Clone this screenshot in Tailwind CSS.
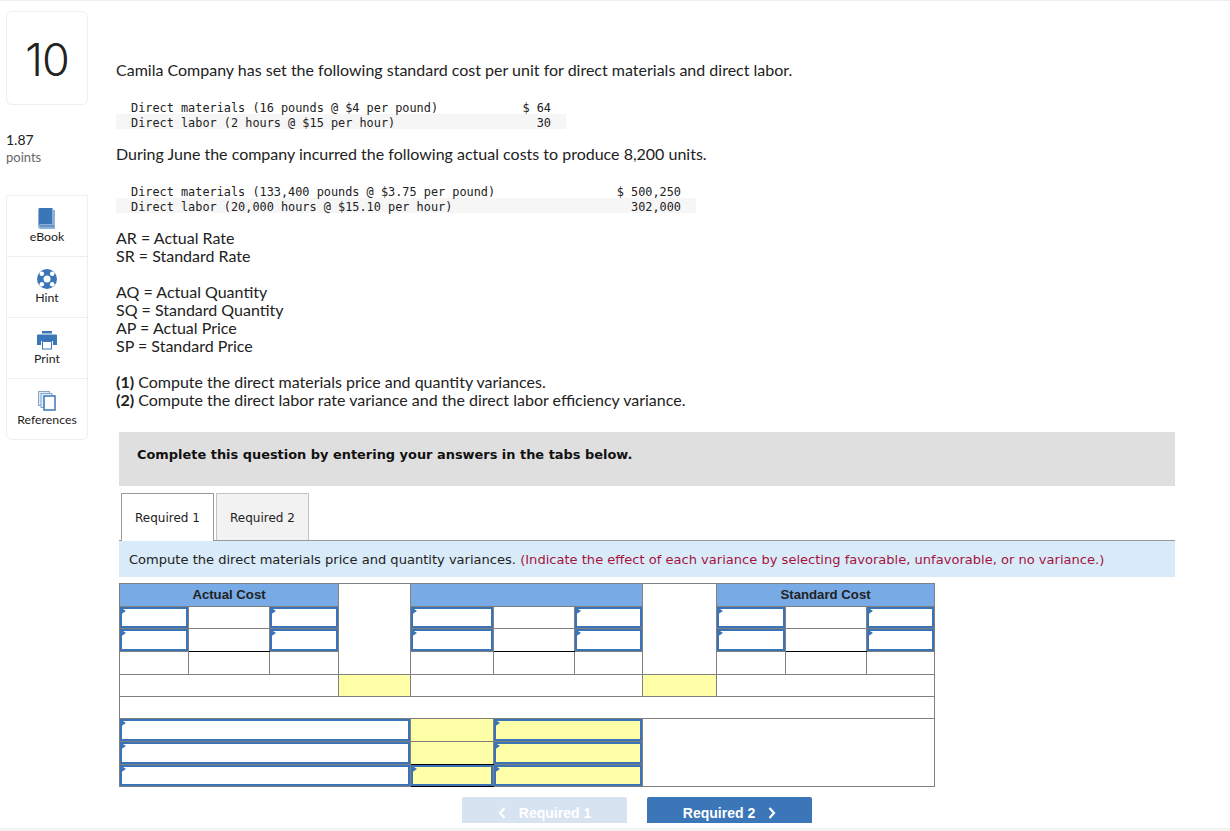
<!DOCTYPE html>
<html lang="en">
<head>
    <meta charset="UTF-8">
    <title>Question 10</title>
    <script src="https://cdn.jsdelivr.net/npm/@tailwindcss/browser@4"></script>
</head>
<body class="bg-white">
<div class="h-[831px] w-[1230px] overflow-hidden border-t border-[#eeeeee] font-['Lato',sans-serif] text-[#222222]">
  <div class="flex h-[830px] border-b-[3px] border-[#f2f2f2]">
    <!-- left rail -->
    <div class="w-[116px] shrink-0 pl-[6px] pt-[10px]">
      <div class="flex h-[94px] w-[82px] items-center justify-center rounded-md border border-[#eeeeee] pt-[2px] font-['Inter',sans-serif] text-[45px] font-light leading-none tracking-[-1px]">10</div>
      <div class="mt-[27px] text-[14px] leading-[16px]">1.87</div>
      <div class="text-[13px] leading-[18px] text-[#666666]">points</div>
      <div class="mt-[29px] w-[82px] rounded-b-md border border-[#eeeeee] text-center text-[12.300px] leading-[14px]">
        <div class="flex h-[61px] flex-col items-center border-b border-[#eeeeee] pt-[12px]">
          <svg width="20" height="21" viewBox="0 0 20 21"><path d="M3 0h13v2h2v19H4a3 3 0 0 1-3-3V2a2 2 0 0 1 2-2z" fill="#8fb0d8"/><path d="M2 0h13v16H4a3 3 0 0 0-2 .8z" fill="#3b76b9"/><path d="M3 18h14" stroke="#3b76b9"/></svg>
          <span class="mt-[1px]">eBook</span>
        </div>
        <div class="flex h-[61px] flex-col items-center border-b border-[#eeeeee] pt-[12px]">
          <svg width="20" height="20" viewBox="0 0 20 20"><circle cx="10" cy="10" r="10" fill="#3b76b9"/><circle cx="10" cy="10" r="3.500" fill="#fff"/><circle cx="4.800" cy="4.800" r="2.300" fill="#fff"/><circle cx="15.200" cy="4.800" r="2.300" fill="#fff"/><circle cx="4.800" cy="15.200" r="2.300" fill="#fff"/><circle cx="15.200" cy="15.200" r="2.300" fill="#fff"/></svg>
          <span class="mt-[2px]">Hint</span>
        </div>
        <div class="flex h-[61px] flex-col items-center border-b border-[#eeeeee] pt-[13px]">
          <svg width="20" height="19" viewBox="0 0 20 19"><rect x="5" y="0" width="10" height="2.500" fill="#3b76b9"/><path d="M1 3.500h18a1 1 0 0 1 1 1V14h-4v-4H4v4H0V4.500a1 1 0 0 1 1-1z" fill="#3b76b9"/><rect x="5.500" y="10.500" width="9" height="7.500" fill="#fff" stroke="#3b76b9"/></svg>
          <span class="mt-[2px]">Print</span>
        </div>
        <div class="flex h-[60px] flex-col items-center pt-[12px]">
          <svg width="20" height="20" viewBox="0 0 20 20" fill="#fff"><rect x="1.500" y="0.500" width="11" height="14" fill="#dfe8f3" stroke="#8fa3bb"/><rect x="4" y="2.500" width="11" height="14" fill="#e3eefb" stroke="#7ba6d8"/><rect x="7" y="5" width="11" height="14" stroke="#3b76b9" stroke-width="1.500"/></svg>
          <span class="mt-[2px]">References</span>
        </div>
      </div>
    </div>

    <!-- question -->
    <div class="w-[1060px] text-[16px]">
      <p class="mt-[59px] leading-[20px]">Camila Company has set the following standard cost per unit for direct materials and direct labor.</p>

      <div class="mt-[19px] w-[450px] font-['DejaVu_Sans_Mono',monospace] text-[11.860px] leading-[19px]">
        <div class="flex h-[15px] justify-between pl-[15px] pr-[15px]"><span>Direct materials (16 pounds @ $4 per pound)</span><span>$ 64</span></div>
        <div class="flex h-[15px] justify-between bg-[#f6f6f6] pl-[15px] pr-[15px]"><span>Direct labor (2 hours @ $15 per hour)</span><span>30</span></div>
      </div>

      <p class="mt-[15px] leading-[20px]">During June the company incurred the following actual costs to produce 8,200 units.</p>

      <div class="mt-[19px] w-[580px] font-['DejaVu_Sans_Mono',monospace] text-[11.860px] leading-[19px]">
        <div class="flex h-[15px] justify-between pl-[15px] pr-[15px]"><span>Direct materials (133,400 pounds @ $3.75 per pound)</span><span>$ 500,250</span></div>
        <div class="flex h-[15px] justify-between bg-[#f6f6f6] pl-[15px] pr-[15px]"><span>Direct labor (20,000 hours @ $15.10 per hour)</span><span>302,000</span></div>
      </div>

      <div class="mt-[16px] leading-[18px]">
        <p>AR = Actual Rate</p>
        <p>SR = Standard Rate</p>
      </div>
      <div class="mt-[18px] leading-[18px]">
        <p>AQ = Actual Quantity</p>
        <p>SQ = Standard Quantity</p>
        <p>AP = Actual Price</p>
        <p>SP = Standard Price</p>
      </div>
      <div class="mt-[18px] leading-[18px]">
        <p><b>(1)</b> Compute the direct materials price and quantity variances.</p>
        <p><b>(2)</b> Compute the direct labor rate variance and the direct labor efficiency variance.</p>
      </div>

      <!-- worksheet -->
      <div class="ml-[3px] mt-[23px] w-[1056px] font-['DejaVu_Sans',sans-serif]">
        <div class="flex h-[54px] items-center bg-[#dfdfdf] pb-[8px] pl-[18px] text-[12.930px] font-bold text-[#111111]">Complete this question by entering your answers in the tabs below.</div>

        <div class="mt-[7px] flex gap-[2px] border-b border-[#999999] pl-[2px] text-[12px]">
          <div class="-mb-[1px] flex h-[48px] w-[93px] items-center justify-center border border-b-0 border-[#999999] bg-white">Required 1</div>
          <div class="flex h-[47px] w-[93px] items-center justify-center border border-b-0 border-[#c4c4c4] bg-[#f2f2f2] pt-[1px]">Required 2</div>
        </div>

        <div class="flex h-[36px] items-center bg-[#d9ebf9] pl-[10px] pt-[2px] text-[13.050px]">
          <span>Compute the direct materials price and quantity variances.&nbsp;<span class="text-[#a5133f]">(Indicate the effect of each variance by selecting favorable, unfavorable, or no variance.)</span></span>
        </div>

        <table class="mt-[6px] w-[815px] table-fixed border-collapse border border-[#808080] font-['Liberation_Sans',sans-serif] text-[13.200px]">
          <colgroup>
            <col class="w-[69px]"><col class="w-[81px]"><col class="w-[69px]"><col class="w-[72px]"><col class="w-[83px]"><col class="w-[81px]"><col class="w-[68px]"><col class="w-[74px]"><col class="w-[69px]"><col class="w-[81px]"><col class="w-[68px]">
          </colgroup>
          <tbody>
            <tr class="h-[23px]">
              <th colspan="3" class="border border-[#808080] bg-[#78abe5] p-0 text-center font-bold">Actual Cost</th>
              <td rowspan="4" class="border border-[#808080] bg-white p-0"></td>
              <th colspan="3" class="border border-[#808080] bg-[#78abe5] p-0"></th>
              <td rowspan="4" class="border border-[#808080] bg-white p-0"></td>
              <th colspan="3" class="border border-[#808080] bg-[#78abe5] p-0 text-center font-bold">Standard Cost</th>
            </tr>
            <tr class="h-[22px]">
              <td class="relative border border-[#808080] p-0"><div class="h-[21px] border-2 border-[#3b74b6]"></div><i class="absolute left-0 top-0 h-0 w-0 border-y-[4px] border-l-[6px] border-y-transparent border-l-[#3b74b6]"></i></td>
              <td class="border border-[#808080] p-0"></td>
              <td class="relative border border-[#808080] p-0"><div class="h-[21px] border-2 border-[#3b74b6]"></div><i class="absolute left-0 top-0 h-0 w-0 border-y-[4px] border-l-[6px] border-y-transparent border-l-[#3b74b6]"></i></td>
              <td class="relative border border-[#808080] p-0"><div class="h-[21px] border-2 border-[#3b74b6]"></div><i class="absolute left-0 top-0 h-0 w-0 border-y-[4px] border-l-[6px] border-y-transparent border-l-[#3b74b6]"></i></td>
              <td class="border border-[#808080] p-0"></td>
              <td class="relative border border-[#808080] p-0"><div class="h-[21px] border-2 border-[#3b74b6]"></div><i class="absolute left-0 top-0 h-0 w-0 border-y-[4px] border-l-[6px] border-y-transparent border-l-[#3b74b6]"></i></td>
              <td class="relative border border-[#808080] p-0"><div class="h-[21px] border-2 border-[#3b74b6]"></div><i class="absolute left-0 top-0 h-0 w-0 border-y-[4px] border-l-[6px] border-y-transparent border-l-[#3b74b6]"></i></td>
              <td class="border border-[#808080] p-0"></td>
              <td class="relative border border-[#808080] p-0"><div class="h-[21px] border-2 border-[#3b74b6]"></div><i class="absolute left-0 top-0 h-0 w-0 border-y-[4px] border-l-[6px] border-y-transparent border-l-[#3b74b6]"></i></td>
            </tr>
            <tr class="h-[23px]">
              <td class="relative border border-[#808080] p-0"><div class="h-[22px] border-2 border-[#3b74b6]"></div><i class="absolute left-0 top-0 h-0 w-0 border-y-[4px] border-l-[6px] border-y-transparent border-l-[#3b74b6]"></i></td>
              <td class="border border-[#808080] border-b-black p-0"></td>
              <td class="relative border border-[#808080] p-0"><div class="h-[22px] border-2 border-[#3b74b6]"></div><i class="absolute left-0 top-0 h-0 w-0 border-y-[4px] border-l-[6px] border-y-transparent border-l-[#3b74b6]"></i></td>
              <td class="relative border border-[#808080] p-0"><div class="h-[22px] border-2 border-[#3b74b6]"></div><i class="absolute left-0 top-0 h-0 w-0 border-y-[4px] border-l-[6px] border-y-transparent border-l-[#3b74b6]"></i></td>
              <td class="border border-[#808080] border-b-black p-0"></td>
              <td class="relative border border-[#808080] p-0"><div class="h-[22px] border-2 border-[#3b74b6]"></div><i class="absolute left-0 top-0 h-0 w-0 border-y-[4px] border-l-[6px] border-y-transparent border-l-[#3b74b6]"></i></td>
              <td class="relative border border-[#808080] p-0"><div class="h-[22px] border-2 border-[#3b74b6]"></div><i class="absolute left-0 top-0 h-0 w-0 border-y-[4px] border-l-[6px] border-y-transparent border-l-[#3b74b6]"></i></td>
              <td class="border border-[#808080] border-b-black p-0"></td>
              <td class="relative border border-[#808080] p-0"><div class="h-[22px] border-2 border-[#3b74b6]"></div><i class="absolute left-0 top-0 h-0 w-0 border-y-[4px] border-l-[6px] border-y-transparent border-l-[#3b74b6]"></i></td>
            </tr>
            <tr class="h-[23px]">
              <td class="border border-[#808080] p-0"></td><td class="border border-[#808080] p-0"></td><td class="border border-[#808080] p-0"></td>
              <td class="border border-[#808080] p-0"></td><td class="border border-[#808080] p-0"></td><td class="border border-[#808080] p-0"></td>
              <td class="border border-[#808080] p-0"></td><td class="border border-[#808080] p-0"></td><td class="border border-[#808080] p-0"></td>
            </tr>
            <tr class="h-[22px]">
              <td colspan="3" class="border border-[#808080] p-0"></td>
              <td class="border border-[#808080] bg-[#ffffa8] p-0"></td>
              <td colspan="3" class="border border-[#808080] p-0"></td>
              <td class="border border-[#808080] bg-[#ffffa8] p-0"></td>
              <td colspan="3" class="border border-[#808080] p-0"></td>
            </tr>
            <tr class="h-[22px]"><td colspan="11" class="border border-[#808080] p-0"></td></tr>
            <tr class="h-[23px]">
              <td colspan="4" class="relative border border-[#808080] p-0"><div class="h-[22px] border-2 border-[#3b74b6]"></div><i class="absolute left-0 top-0 h-0 w-0 border-y-[4px] border-l-[6px] border-y-transparent border-l-[#3b74b6]"></i></td>
              <td class="border border-[#808080] bg-[#ffffa8] p-0"></td>
              <td colspan="2" class="relative border border-[#808080] bg-[#ffffa8] p-0"><div class="h-[22px] border-2 border-[#3b74b6]"></div><i class="absolute left-0 top-0 h-0 w-0 border-y-[4px] border-l-[6px] border-y-transparent border-l-[#3b74b6]"></i></td>
              <td rowspan="3" colspan="4" class="border border-[#808080] p-0"></td>
            </tr>
            <tr class="h-[23px]">
              <td colspan="4" class="relative border border-[#808080] p-0"><div class="h-[22px] border-2 border-[#3b74b6]"></div><i class="absolute left-0 top-0 h-0 w-0 border-y-[4px] border-l-[6px] border-y-transparent border-l-[#3b74b6]"></i></td>
              <td class="border border-[#808080] border-b-black bg-[#ffffa8] p-0"></td>
              <td colspan="2" class="relative border border-[#808080] bg-[#ffffa8] p-0"><div class="h-[22px] border-2 border-[#3b74b6]"></div><i class="absolute left-0 top-0 h-0 w-0 border-y-[4px] border-l-[6px] border-y-transparent border-l-[#3b74b6]"></i></td>
            </tr>
            <tr class="h-[22px]">
              <td colspan="4" class="relative border border-[#808080] p-0"><div class="h-[21px] border-2 border-[#3b74b6]"></div><i class="absolute left-0 top-0 h-0 w-0 border-y-[4px] border-l-[6px] border-y-transparent border-l-[#3b74b6]"></i></td>
              <td class="relative border border-[#808080] border-b-black bg-[#ffffa8] p-0"><div class="h-[21px] border-2 border-[#3b74b6]"></div><i class="absolute left-0 top-0 h-0 w-0 border-y-[4px] border-l-[6px] border-y-transparent border-l-[#3b74b6]"></i></td>
              <td colspan="2" class="relative border border-[#808080] bg-[#ffffa8] p-0"><div class="h-[21px] border-2 border-[#3b74b6]"></div><i class="absolute left-0 top-0 h-0 w-0 border-y-[4px] border-l-[6px] border-y-transparent border-l-[#3b74b6]"></i></td>
            </tr>
          </tbody>
        </table>

        <div class="ml-[343px] mt-[10px] flex gap-[20px] font-['Liberation_Sans',sans-serif] text-[14px] font-bold text-white">
          <div class="flex h-[26px] w-[165px] items-center justify-center gap-[13px] rounded-t-[2px] bg-[#d7e3f1] pt-[6px]">
            <svg width="8" height="12" viewBox="0 0 8 12"><path d="M6.500 1L2 6l4.500 5" fill="none" stroke="#fff" stroke-width="2.200"/></svg>
            <span>Required 1</span>
          </div>
          <div class="flex h-[26px] w-[165px] items-center justify-center gap-[13px] rounded-t-[2px] bg-[#3b76b9] pt-[6px]">
            <span>Required 2</span>
            <svg width="8" height="12" viewBox="0 0 8 12"><path d="M1.500 1L6 6l-4.500 5" fill="none" stroke="#fff" stroke-width="2.200"/></svg>
          </div>
        </div>
      </div>
    </div>
  </div>
</div>
</body>
</html>
